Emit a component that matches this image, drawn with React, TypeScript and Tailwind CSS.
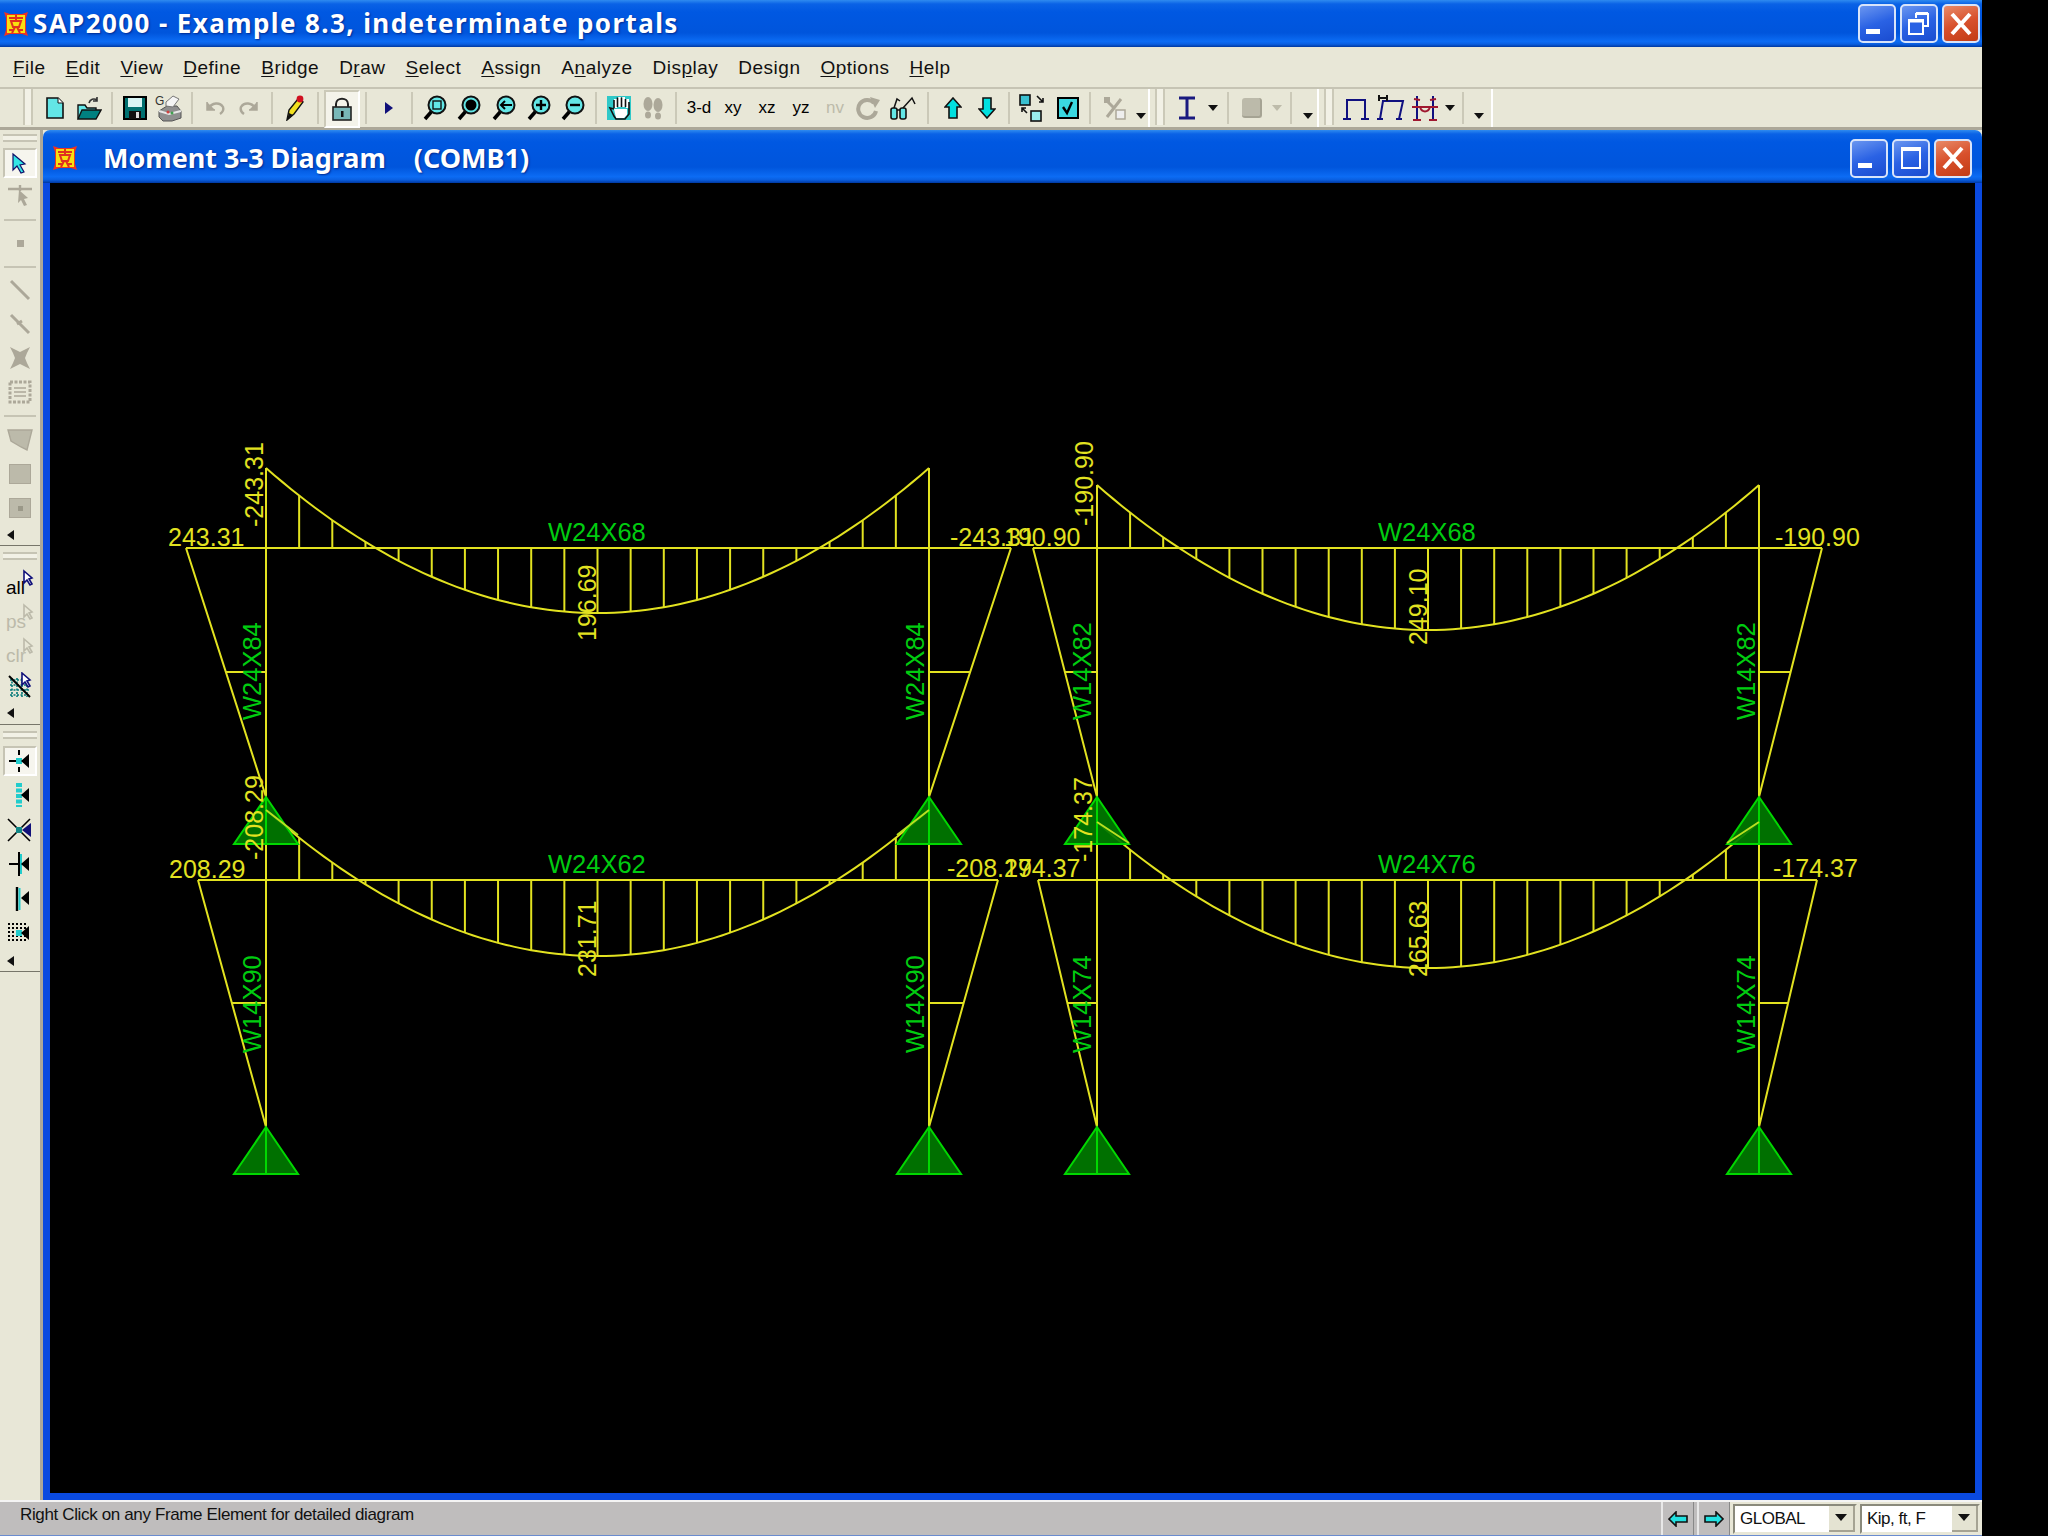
import React from "react";
import { clsx } from "clsx";

const TITLE_BG =
  "bg-[linear-gradient(180deg,#2f8bf0_0px,#0a62e6_4px,#0058e2_12px,#0055dc_70%,#0c6cf4_88%,#0a5fe0_94%,#0038a0_100%)]";

const YELLOW = "#e2e220";
const GREEN = "#00cc10";
const GRAY = "#aca899";
const CYAN = "#63e6e6";

// ---- window chrome

function SapLogo() {
  return (
    <svg width="24" height="24" viewBox="0 0 24 24">
      <path d="M0 0l6 2h12l6-2-2 6v12l2 6-6-2H6l-6 2 2-6V6z" fill="#ee3322" />
      <rect x="3" y="3" width="18" height="18" fill="#f8e010" />
      <path
        d="M5 6h14M12 3v6M7 9h10l-2 6H9zM8 21l3-6M16 21l-3-6M5 18h4M15 18h4"
        stroke="#e03020"
        strokeWidth="2"
        fill="none"
      />
    </svg>
  );
}

function CapButton({ kind, red }: { kind: "min" | "restore" | "max" | "close"; red?: boolean }) {
  return (
    <div
      className={clsx(
        "w-[38px] h-[39px] rounded-[5px] border-2 border-[#d8e4fa] flex items-center justify-center",
        red
          ? "bg-[linear-gradient(160deg,#e88a68,#d8502c_50%,#c23c16)]"
          : "bg-[linear-gradient(160deg,#6a96f0,#2a62e4_50%,#1a4cd0)]"
      )}
    >
      <svg width="30" height="30" viewBox="0 0 30 30">
        {kind === "min" && <rect x="4" y="20" width="14" height="5" fill="#fff" />}
        {kind === "restore" && (
          <g fill="none" stroke="#fff" strokeWidth="2">
            <path d="M12 9V5h12v12h-4" strokeWidth="2" />
            <path d="M12 4.5h12" strokeWidth="3" />
            <rect x="5" y="11" width="14" height="14" fill="#2a62e4" />
            <path d="M5 12h14" strokeWidth="3" />
          </g>
        )}
        {kind === "max" && (
          <g fill="none" stroke="#fff" strokeWidth="2">
            <rect x="6" y="5" width="18" height="20" />
            <path d="M6 6h18" strokeWidth="4" />
          </g>
        )}
        {kind === "close" && (
          <path d="M6 5l18 20M24 5L6 25" stroke="#fff" strokeWidth="4" fill="none" />
        )}
      </svg>
    </div>
  );
}

const menus: [string, string, string][] = [
  ["", "F", "ile"],
  ["", "E", "dit"],
  ["", "V", "iew"],
  ["", "D", "efine"],
  ["", "B", "ridge"],
  ["D", "r", "aw"],
  ["", "S", "elect"],
  ["", "A", "ssign"],
  ["A", "n", "alyze"],
  ["Dis", "p", "lay"],
  ["Desi", "g", "n"],
  ["", "O", "ptions"],
  ["", "H", "elp"],
];

// ---- toolbar pieces

function Slot({ className, children }: { className: string; children?: React.ReactNode }) {
  return <div className={clsx("h-full flex items-center justify-center shrink-0", className)}>{children}</div>;
}

function Sep({ className }: { className: string }) {
  return (
    <div className={clsx("h-full flex items-center justify-center shrink-0", className)}>
      <div className="w-[2px] h-[32px] bg-[#cbc9b8]" />
    </div>
  );
}

function Grip() {
  return (
    <div className="w-[10px] h-[36px] mx-[5px] border-2 border-y-0 border-[#cbc9b8] bg-[#f2f1e6] shrink-0" />
  );
}

function Caret({ low }: { low?: boolean }) {
  return (
    <svg width="12" height="16" viewBox="0 0 12 16" className={low ? "mt-[16px]" : ""}>
      <path d="M1 5h10L6 11z" fill="#111" />
    </svg>
  );
}

function Ico({ children, w = 26, h = 26 }: { children: React.ReactNode; w?: number; h?: number }) {
  return (
    <svg width={w} height={h} viewBox={`0 0 ${w} ${h}`}>
      {children}
    </svg>
  );
}

function Glass({ children }: { children?: React.ReactNode }) {
  return (
    <Ico>
      <path d="M3 24l7-8" stroke="#000" strokeWidth="3.5" />
      <circle cx="15" cy="10" r="8.5" fill={CYAN} stroke="#111" strokeWidth="2" />
      {children}
    </Ico>
  );
}

function TextBtn({ label, dim }: { label: string; dim?: boolean }) {
  return (
    <span className={clsx("font-['Liberation_Sans',sans-serif] text-[17px]", dim ? "text-[#bdbbaa]" : "text-black")}>
      {label}
    </span>
  );
}

function Portal({ variant }: { variant: 0 | 1 | 2 }) {
  return (
    <Ico w={30} h={28}>
      {variant === 0 && (
        <path d="M6 25V6h18v19M2 25h8M20 25h8M3 5" stroke="#101080" strokeWidth="2" fill="none" />
      )}
      {variant === 1 && (
        <g fill="none" stroke="#101080" strokeWidth="2">
          <path d="M5 25l3-18h20l-4 18M2 25h6M21 25h6M7 7h20" />
          <path d="M4 1v6M12 1v6M4 4h8" stroke="#111" />
        </g>
      )}
      {variant === 2 && (
        <g fill="none">
          <path d="M7 2v24M23 2v24" stroke="#101080" strokeWidth="2" />
          <path d="M2 13h26M10 13c2 6 8 6 10 0M3 26h8M19 26h8" stroke="#a01830" strokeWidth="2" />
          <path d="M4 5l6 1M26 5l-6 1" stroke="#a01830" strokeWidth="2" />
        </g>
      )}
    </Ico>
  );
}

function TopToolbar() {
  return (
    <div className="h-[43px] shrink-0 flex border-t-2 border-[#c6c4b4] border-b-[3px] border-b-[#aca899]">
      <div className="flex h-full w-[1150px] border-r-2 border-white pl-[18px] shrink-0">
        <Grip />
        <Slot className="w-[34px]">
          <Ico w={20} h={22}>
            <path d="M2 1h11l5 5v15H2z" fill={CYAN} stroke="#111" strokeWidth="1.6" />
            <path d="M13 1v5h5" fill="#fff" stroke="#111" strokeWidth="1" />
          </Ico>
        </Slot>
        <Slot className="w-[34px]">
          <Ico>
            <path d="M2 23V10h7l2 3h9v10z" fill={CYAN} stroke="#111" strokeWidth="1.4" />
            <path d="M2 24l4-9h19l-5 9z" fill="#008080" stroke="#111" strokeWidth="1.4" />
            <path d="M13 8c1-4 5-5 8-3M21 2v4h-4" fill="none" stroke="#333" strokeWidth="1.6" />
          </Ico>
        </Slot>
        <Sep className="w-[12px]" />
        <Slot className="w-[34px]">
          <Ico w={24} h={24}>
            <rect x="1" y="1" width="22" height="22" fill="#007070" stroke="#000" strokeWidth="2" />
            <rect x="5" y="2" width="14" height="9" fill="#d8f4f4" />
            <rect x="6" y="15" width="12" height="8" fill="#111" />
            <rect x="13" y="16" width="3" height="6" fill="#ddd" />
          </Ico>
        </Slot>
        <Slot className="w-[34px]">
          <Ico w={28} h={28}>
            <path d="M4 17l8-5h10l4 5v7l-9 3H8l-4-4z" fill="#8f8f8f" stroke="#555" />
            <path d="M4 17l10 3 12-3" fill="none" stroke="#e8e8e8" strokeWidth="2" />
            <path d="M11 8l7-6 6 3-6 8-7-1z" fill="#f4f4f4" stroke="#777" />
            <circle cx="13" cy="18" r="1.5" fill="#d04040" />
            <circle cx="17" cy="19" r="1.5" fill="#40a050" />
            <text x="0" y="11" fontSize="12" fontFamily="Liberation Sans, sans-serif" fill="#333">
              G
            </text>
          </Ico>
        </Slot>
        <Sep className="w-[12px]" />
        <Slot className="w-[34px]">
          <Ico w={22} h={16}>
            <path d="M3 2v8h8" fill={GRAY} stroke={GRAY} strokeWidth="1.5" />
            <path d="M4 9c4-7 12-7 15-2 1 3 0 5-3 7" fill="none" stroke={GRAY} strokeWidth="2.4" />
          </Ico>
        </Slot>
        <Slot className="w-[34px]">
          <Ico w={22} h={16}>
            <path d="M19 2v8h-8" fill={GRAY} stroke={GRAY} strokeWidth="1.5" />
            <path d="M18 9C14 2 6 2 3 7c-1 3 0 5 3 7" fill="none" stroke={GRAY} strokeWidth="2.4" />
          </Ico>
        </Slot>
        <Sep className="w-[12px]" />
        <Slot className="w-[34px]">
          <Ico w={18} h={26}>
            <path d="M1 25l2-10 9-11 5 3-9 12z" fill="#f2e020" stroke="#111" strokeWidth="1.4" />
            <path d="M1 25l2-7 4 2z" fill="#111" />
            <circle cx="14" cy="4" r="3.4" fill="#d01020" />
          </Ico>
        </Slot>
        <Sep className="w-[12px]" />
        <Slot className="w-[36px] border-2 border-[#cbc9b8] border-b-white border-r-white bg-[#f4f3ea] h-[36px] mt-[1px]">
          <Ico w={22} h={24}>
            <path d="M5 11V7c0-7 12-7 12 0v4" fill="none" stroke="#222" strokeWidth="2" />
            <rect x="2" y="10" width="18" height="13" fill="#79b8b8" stroke="#222" strokeWidth="1.6" />
            <rect x="10" y="14" width="2.5" height="6" fill="#111" />
          </Ico>
        </Slot>
        <Sep className="w-[12px]" />
        <Slot className="w-[34px]">
          <svg width="8" height="12" viewBox="0 0 8 12">
            <path d="M0 0l8 6-8 6z" fill="#10107a" />
          </svg>
        </Slot>
        <Sep className="w-[12px]" />
        <Slot className="w-[34px]">
          <Glass>
            <rect x="11" y="6" width="8" height="8" fill="none" stroke="#111" strokeWidth="1.4" />
          </Glass>
        </Slot>
        <Slot className="w-[34px]">
          <Glass>
            <circle cx="15" cy="10" r="5.5" fill="#000" />
          </Glass>
        </Slot>
        <Slot className="w-[36px]">
          <Glass>
            <path d="M21 10H10M14 6l-4 4 4 4" fill="none" stroke="#000" strokeWidth="2" />
          </Glass>
        </Slot>
        <Slot className="w-[34px]">
          <Glass>
            <path d="M15 5v10M10 10h10" stroke="#000" strokeWidth="2.4" />
          </Glass>
        </Slot>
        <Slot className="w-[34px]">
          <Glass>
            <path d="M10 10h10" stroke="#000" strokeWidth="2.4" />
          </Glass>
        </Slot>
        <Sep className="w-[12px]" />
        <Slot className="w-[34px]">
          <Ico w={24} h={24}>
            <rect x="0" y="0" width="24" height="24" fill="#30c8c8" />
            <path d="M7 13h13v6l-3 3H9z" fill="#fff" />
            <path d="M7 3h3v9H7zM11 1h3v10h-3zM15 1h3v10h-3zM19 3h3v9h-3z" fill="#fff" />
            <path
              d="M7 12V4M10.500 11V1.500M14.500 11V1.500M18.500 11V3M22 12V6M7 13l-4-1 4 8 2 3h9l4-5v-6"
              fill="none"
              stroke="#111"
              strokeWidth="1.6"
            />
          </Ico>
        </Slot>
        <Slot className="w-[34px]">
          <Ico w={22} h={24}>
            <ellipse cx="6" cy="8" rx="4.5" ry="7" fill={GRAY} />
            <ellipse cx="6" cy="19" rx="3" ry="3.5" fill={GRAY} />
            <ellipse cx="16" cy="9" rx="4.5" ry="7" fill={GRAY} />
            <ellipse cx="16" cy="20" rx="3" ry="3.5" fill={GRAY} />
          </Ico>
        </Slot>
        <Sep className="w-[12px]" />
        <Slot className="w-[34px]">
          <TextBtn label="3-d" />
        </Slot>
        <Slot className="w-[34px]">
          <TextBtn label="xy" />
        </Slot>
        <Slot className="w-[34px]">
          <TextBtn label="xz" />
        </Slot>
        <Slot className="w-[34px]">
          <TextBtn label="yz" />
        </Slot>
        <Slot className="w-[34px]">
          <TextBtn label="nv" dim />
        </Slot>
        <Slot className="w-[34px]">
          <Ico>
            <path d="M18 8a9 9 0 1 0 2 8" fill="none" stroke={GRAY} strokeWidth="4" />
            <path d="M14 2l10 3-5 8z" fill={GRAY} />
          </Ico>
        </Slot>
        <Slot className="w-[34px]">
          <Ico w={30} h={26}>
            <rect x="3" y="13" width="6" height="11" rx="2" fill={CYAN} stroke="#111" strokeWidth="1.6" />
            <rect x="12" y="13" width="6" height="11" rx="2" fill={CYAN} stroke="#111" strokeWidth="1.6" />
            <path d="M6 13l3-9 3 2M15 13l9-10 3 6M9 15h3" fill="none" stroke="#111" strokeWidth="1.5" />
          </Ico>
        </Slot>
        <Sep className="w-[16px]" />
        <Slot className="w-[34px]">
          <Ico w={18} h={22}>
            <path d="M9 1l8 9h-4v11H5V10H1z" fill="#00e0e0" stroke="#111" strokeWidth="1.6" />
          </Ico>
        </Slot>
        <Slot className="w-[34px]">
          <Ico w={18} h={22}>
            <path d="M9 21l8-9h-4V1H5v11H1z" fill="#00e0e0" stroke="#111" strokeWidth="1.6" />
          </Ico>
        </Slot>
        <Sep className="w-[10px]" />
        <Slot className="w-[36px]">
          <Ico w={28} h={30}>
            <rect x="2" y="2" width="10" height="10" fill="#3ac0d0" stroke="#111" strokeWidth="1.6" />
            <rect x="13" y="18" width="10" height="10" fill="#9ee" stroke="#111" strokeWidth="1.6" />
            <path d="M19 3l6 6M25 5v4h-4M9 20l-5-5M4 19v-4h4" fill="none" stroke="#111" strokeWidth="1.6" />
          </Ico>
        </Slot>
        <Slot className="w-[36px]">
          <Ico w={22} h={22}>
            <rect x="1" y="1" width="20" height="20" fill="#3ad8e0" stroke="#000" strokeWidth="2" />
            <path d="M6 10l4 6 5-11" fill="none" stroke="#000" strokeWidth="2.4" />
          </Ico>
        </Slot>
        <Sep className="w-[8px]" />
        <Slot className="w-[3px]" />
        <Slot className="w-[34px]">
          <Ico>
            <path d="M4 4l8 8M20 4L6 22" stroke={GRAY} strokeWidth="3" />
            <rect x="3" y="2" width="6" height="6" fill={GRAY} />
            <rect x="15" y="15" width="9" height="9" fill="#eee" stroke={GRAY} strokeWidth="1.5" />
          </Ico>
        </Slot>
        <Slot className="w-[20px]">
          <Caret low />
        </Slot>
      </div>

      <div className="flex h-full w-[169px] border-r-2 border-white shrink-0">
        <Grip />
        <Slot className="w-[32px] ml-[1px]">
          <Ico w={18} h={24}>
            <path d="M1 2h16M9 2v20M1 22h16" stroke="#1a1a80" strokeWidth="3" fill="none" />
          </Ico>
        </Slot>
        <Slot className="w-[20px]">
          <Caret />
        </Slot>
        <Sep className="w-[10px]" />
        <Slot className="w-[34px] ml-[2px]">
          <div className="w-[20px] h-[20px] rounded-[3px] bg-[#bcbaaa] border-r-2 border-b-2 border-[#a5a393]" />
        </Slot>
        <Slot className="w-[16px]">
          <svg width="12" height="8" viewBox="0 0 12 8">
            <path d="M1 1h10L6 7z" fill="#bdbbaa" />
          </svg>
        </Slot>
        <Sep className="w-[12px]" />
        <Slot className="w-[22px]">
          <Caret low />
        </Slot>
      </div>

      <div className="flex h-full w-[174px] border-r-2 border-white shrink-0">
        <Grip />
        <Slot className="w-[34px]">
          <Portal variant={0} />
        </Slot>
        <Slot className="w-[34px]">
          <Portal variant={1} />
        </Slot>
        <Slot className="w-[35px]">
          <Portal variant={2} />
        </Slot>
        <Slot className="w-[16px]">
          <Caret />
        </Slot>
        <Sep className="w-[10px]" />
        <Slot className="w-[22px]">
          <Caret low />
        </Slot>
      </div>
    </div>
  );
}

// ---- left toolbar

function VSlot({ className, children }: { className: string; children?: React.ReactNode }) {
  return <div className={clsx("w-full flex items-center justify-center shrink-0", className)}>{children}</div>;
}

function VSep({ className }: { className: string }) {
  return (
    <div className={clsx("w-full flex items-center justify-center shrink-0", className)}>
      <div className="h-[2px] w-[32px] bg-[#c6c4b4]" />
    </div>
  );
}

function VGrip({ className }: { className: string }) {
  return (
    <div className={clsx("w-full flex items-center justify-center shrink-0", className)}>
      <div className="h-[8px] w-[34px] border-2 border-x-0 border-[#c6c4b4] bg-[#f2f1e6]" />
    </div>
  );
}

function BackArrow() {
  return (
    <div className="w-full h-full flex items-center pl-[7px]">
      <svg width="7" height="10" viewBox="0 0 7 10">
        <path d="M7 0v10L0 5z" fill="#111" />
      </svg>
    </div>
  );
}

function Cursor({ color, x = 0, y = 0 }: { color: string; x?: number; y?: number }) {
  return (
    <path
      transform={`translate(${x} ${y})`}
      d="M0 0l12 10-5 1 4 7-3 1-4-7-4 4z"
      fill={color}
      stroke="#10106a"
      strokeWidth="1.2"
    />
  );
}

function SelectLabel({ text, dim }: { text: string; dim?: boolean }) {
  return (
    <Ico w={30} h={28}>
      <text
        x="1"
        y="25"
        fontSize="19"
        fontFamily="Liberation Sans, sans-serif"
        fill={dim ? "#bcbaaa" : "#000"}
      >
        {text}
      </text>
      <path
        transform="translate(19 2)"
        d="M0 0l8 7-3 1 3 5-2 1-3-5-3 3z"
        fill={dim ? "#e8e7d7" : "#fff"}
        stroke={dim ? "#bcbaaa" : "#10107a"}
        strokeWidth="1.6"
      />
    </Ico>
  );
}

function Snap({ children }: { children: React.ReactNode }) {
  return (
    <Ico w={30} h={28}>
      {children}
      <path d="M24 7v14l-8-7z" fill="#000" />
    </Ico>
  );
}

function LeftToolbar() {
  return (
    <div className="w-[43px] shrink-0 flex flex-col bg-[#e8e7d7] border-r-[3px] border-[#aca899]">
      <div className="flex flex-col w-full border-b border-[#77766a]">
        <VGrip className="h-[16px]" />
        <VSlot className="h-[34px]">
          <div className="w-[34px] h-[30px] bg-[#f6f5ee] border-2 border-[#c6c4b4] border-r-white border-b-white flex items-center justify-center">
            <Ico w={18} h={22}>
              <Cursor color="#33e6e6" x={2} y={2} />
            </Ico>
          </div>
        </VSlot>
        <VSlot className="h-[34px]">
          <Ico w={26} h={26}>
            <path d="M1 5h24M13 1v6" stroke={GRAY} strokeWidth="2.4" />
            <path d="M12 6l9 8-4 1 3 6-3 1-3-6-3 3z" fill={GRAY} />
          </Ico>
        </VSlot>
        <VSep className="h-[12px]" />
        <VSlot className="h-[34px]">
          <div className="w-[7px] h-[7px] bg-[#aca899]" />
        </VSlot>
        <VSep className="h-[13px]" />
        <VSlot className="h-[34px]">
          <Ico w={24} h={24}>
            <path d="M3 3l18 18" stroke={GRAY} strokeWidth="3" />
          </Ico>
        </VSlot>
        <VSlot className="h-[34px]">
          <Ico w={24} h={24}>
            <path d="M3 3l18 18M9 12l5-3" stroke={GRAY} strokeWidth="3" />
          </Ico>
        </VSlot>
        <VSlot className="h-[34px]">
          <Ico w={24} h={24}>
            <path d="M2 1l6 3 4 2 4-2 6-3-3 6-2 5 2 5 3 6-6-3-4-2-4 2-6 3 3-6 2-5-2-5z" fill={GRAY} />
          </Ico>
        </VSlot>
        <VSlot className="h-[34px]">
          <Ico w={24} h={24}>
            <rect x="2" y="2" width="20" height="20" fill="none" stroke={GRAY} strokeWidth="3" strokeDasharray="3 1.5" />
            <path d="M6 8h12M6 12h12M6 16h12" stroke={GRAY} strokeWidth="1.6" />
          </Ico>
        </VSlot>
        <VSep className="h-[14px]" />
        <VSlot className="h-[34px]">
          <Ico w={26} h={24}>
            <path d="M1 2h24l-5 20-6-3-10-6z" fill="#bcbaaa" stroke={GRAY} strokeWidth="1.4" />
          </Ico>
        </VSlot>
        <VSlot className="h-[34px]">
          <div className="w-[22px] h-[20px] bg-[#bcbaaa] border border-[#aca899]" />
        </VSlot>
        <VSlot className="h-[34px]">
          <div className="w-[22px] h-[20px] bg-[#bcbaaa] border border-[#aca899] flex items-center justify-center">
            <div className="w-[5px] h-[5px] bg-[#9a9888]" />
          </div>
        </VSlot>
        <div className="h-[20px]">
          <BackArrow />
        </div>
      </div>

      <div className="flex flex-col w-full border-b border-[#77766a]">
        <VGrip className="h-[20px]" />
        <VSlot className="h-[34px]">
          <SelectLabel text="all" />
        </VSlot>
        <VSlot className="h-[34px]">
          <SelectLabel text="ps" dim />
        </VSlot>
        <VSlot className="h-[34px]">
          <SelectLabel text="clr" dim />
        </VSlot>
        <VSlot className="h-[34px]">
          <Ico w={26} h={26}>
            <path
              d="M3 8h19M3 13h19M3 18h19M3 23h19M5 6v19M10 6v19M15 6v19M20 6v19"
              stroke="#007878"
              strokeWidth="1.6"
              strokeDasharray="2 1.5"
            />
            <path d="M2 4l21 21" stroke="#000" strokeWidth="2" />
            <path
              transform="translate(15 1)"
              d="M0 0l8 7-3 1 3 5-2 1-3-5-3 3z"
              fill="#fff"
              stroke="#10107a"
              strokeWidth="1.6"
            />
          </Ico>
        </VSlot>
        <div className="h-[22px]">
          <BackArrow />
        </div>
      </div>

      <div className="flex flex-col w-full border-b border-[#77766a]">
        <VGrip className="h-[20px]" />
        <VSlot className="h-[32px]">
          <div className="w-[34px] h-[30px] bg-[#f6f5ee] border-2 border-[#c6c4b4] border-r-white border-b-white flex items-center justify-center">
            <Snap>
              <path d="M4 14h18M14 3v5M14 20v5" stroke="#000" strokeWidth="2" />
              <rect x="11" y="11" width="6" height="6" fill="#22cccc" />
            </Snap>
          </div>
        </VSlot>
        <VSlot className="h-[35px]">
          <Snap>
            <path d="M14 2v24" stroke="#22cccc" strokeWidth="6" strokeDasharray="4 1.5" />
          </Snap>
        </VSlot>
        <VSlot className="h-[35px]">
          <Ico w={30} h={28}>
            <path d="M3 3l22 22M25 3L3 25" stroke="#000" strokeWidth="1.6" />
            <rect x="11" y="11" width="6" height="6" fill="#108888" />
            <path d="M26 7v14l-9-7z" fill="#10107a" />
          </Ico>
        </VSlot>
        <VSlot className="h-[34px]">
          <Snap>
            <path d="M4 14h10" stroke="#000" strokeWidth="2" />
            <path d="M14 2v24" stroke="#000" strokeWidth="2" />
            <path d="M16 4v20" stroke="#22cccc" strokeWidth="2" />
          </Snap>
        </VSlot>
        <VSlot className="h-[34px]">
          <Snap>
            <path d="M12 3v24" stroke="#000" strokeWidth="2.4" />
            <path d="M14.500 4v22" stroke="#22cccc" strokeWidth="2" />
          </Snap>
        </VSlot>
        <VSlot className="h-[36px]">
          <Snap>
            <path
              d="M3 5h20M3 9h20M3 13h20M3 17h20M3 21h20"
              stroke="#000"
              strokeWidth="2"
              strokeDasharray="2 2"
            />
            <rect x="11" y="11" width="6" height="6" fill="#22cccc" />
          </Snap>
        </VSlot>
        <div className="h-[20px]">
          <BackArrow />
        </div>
      </div>
    </div>
  );
}

// ---- the moment diagram

type Beam = { x0: number; x1: number; base: number; top: number; low: number; left: number; right: number };

const beams: Beam[] = [
  { x0: 266, x1: 929, base: 548, top: 468, low: 613, left: 186, right: 1011 },
  { x0: 1097, x1: 1759, base: 548, top: 485, low: 630, left: 1033, right: 1822 },
  { x0: 266, x1: 929, base: 880, top: 810, low: 956, left: 198, right: 998 },
  { x0: 1097, x1: 1759, base: 880, top: 822, low: 968, left: 1038, right: 1817 },
];

// column: x, joint y, foot y, x of the diagram's far end, tick x
const columns = [
  [266, 548, 797, 186, 226],
  [929, 548, 797, 1011, 970],
  [1097, 548, 797, 1033, 1064],
  [1759, 548, 797, 1822, 1791],
  [266, 880, 1127, 198, 232],
  [929, 880, 1127, 998, 963],
  [1097, 880, 1127, 1038, 1067],
  [1759, 880, 1127, 1817, 1788],
];

const supports = [
  [266, 797],
  [929, 797],
  [1097, 797],
  [1759, 797],
  [266, 1127],
  [929, 1127],
  [1097, 1127],
  [1759, 1127],
];

const curveY = (b: Beam, x: number) => {
  const c = (b.x0 + b.x1) / 2;
  const h = (b.x1 - b.x0) / 2;
  return b.low - (b.low - b.top) * ((x - c) / h) ** 2;
};

const hLabels: [string, number, number, string][] = [
  ["243.31", 168, 546, YELLOW],
  ["W24X68", 548, 541, GREEN],
  ["-243.31", 950, 546, YELLOW],
  ["190.90", 1004, 546, YELLOW],
  ["W24X68", 1378, 541, GREEN],
  ["-190.90", 1775, 546, YELLOW],
  ["208.29", 169, 878, YELLOW],
  ["W24X62", 548, 873, GREEN],
  ["-208.29", 947, 877, YELLOW],
  ["174.37", 1004, 877, YELLOW],
  ["W24X76", 1378, 873, GREEN],
  ["-174.37", 1773, 877, YELLOW],
];

const vLabels: [string, number, number, string][] = [
  ["-243.31", 263, 527, YELLOW],
  ["196.69", 596, 641, YELLOW],
  ["W24X84", 261, 720, GREEN],
  ["W24X84", 924, 720, GREEN],
  ["-190.90", 1093, 526, YELLOW],
  ["249.10", 1427, 645, YELLOW],
  ["W14X82", 1091, 720, GREEN],
  ["W14X82", 1755, 720, GREEN],
  ["-208.29", 263, 860, YELLOW],
  ["231.71", 596, 977, YELLOW],
  ["W14X90", 261, 1053, GREEN],
  ["W14X90", 924, 1053, GREEN],
  ["-174.37", 1092, 862, YELLOW],
  ["265.63", 1427, 977, YELLOW],
  ["W14X74", 1091, 1053, GREEN],
  ["W14X74", 1755, 1053, GREEN],
];

function Diagram() {
  return (
    <svg viewBox="51 183 1923 1310" className="block w-full h-full bg-black font-['Liberation_Sans',sans-serif]">
      <g stroke={YELLOW} strokeWidth="2" fill="none">
        {beams.map((b, i) => {
          const pts = Array.from({ length: 81 }, (_, k) => {
            const x = b.x0 + ((b.x1 - b.x0) * k) / 80;
            return `${x},${curveY(b, x)}`;
          });
          const ticks = Array.from({ length: 21 }, (_, k) => b.x0 + ((b.x1 - b.x0) * k) / 20);
          return (
            <g key={i}>
              <path d={`M${b.left} ${b.base}H${b.right}`} />
              {ticks.map((x) => (
                <path key={x} d={`M${x} ${b.base}V${curveY(b, x)}`} />
              ))}
              <polyline points={pts.join(" ")} />
            </g>
          );
        })}
        {columns.map(([x, y0, y1, end, tick], i) => (
          <path key={i} d={`M${end} ${y0}L${x} ${y1}V${y0}M${x} ${(y0 + y1) / 2 - 0.5}H${tick}`} />
        ))}
      </g>
      {supports.map(([x, y], i) => (
        <g key={i}>
          <path
            d={`M${x} ${y}L${x + 32} ${y + 47}H${x - 32}Z`}
            fill="#007a00"
            fillOpacity="0.92"
            stroke="#00d800"
            strokeWidth="2"
          />
          <path d={`M${x} ${y}V${y + 47}`} stroke="#00d800" strokeWidth="2" />
        </g>
      ))}
      {/* curve ends run over the upper supports */}
      <g stroke="#b8e020" strokeWidth="2" fill="none">
        <path d="M266 810L298 835M929 810L897 835M1097 822L1129 843M1759 822L1727 843" />
      </g>
      {hLabels.map(([t, x, y, c], i) => (
        <text key={i} x={x} y={y} fontSize={c === GREEN ? 25.5 : 25} fill={c}>
          {t}
        </text>
      ))}
      {vLabels.map(([t, x, y, c], i) => (
        <text key={i} transform={`translate(${x} ${y}) rotate(-90)`} fontSize={c === GREEN ? 25.5 : 25} fill={c}>
          {t}
        </text>
      ))}
    </svg>
  );
}

// ---- status bar

function StatusArrow({ left }: { left?: boolean }) {
  return (
    <div className="w-[33px] h-full bg-[#bfbdbd] border-l-2 border-[#e8e8e8] border-r border-r-[#888] flex items-center justify-center">
      <svg width="20" height="16" viewBox="0 0 20 16" className={left ? "" : "rotate-180"}>
        <path d="M1 8l7-7v4h11v6H8v4z" fill="#22e0e0" stroke="#111" strokeWidth="1.6" />
      </svg>
    </div>
  );
}

function Combo({ label, className }: { label: string; className: string }) {
  return (
    <div
      className={clsx(
        "h-[30px] bg-white border-2 border-[#8a8a7c] border-r-[#e8e7d7] border-b-[#e8e7d7] flex items-center justify-between pl-[5px] font-['Liberation_Sans',sans-serif] text-[17px] tracking-[-0.5px] text-[#111]",
        className
      )}
    >
      <span>{label}</span>
      <div className="w-[26px] h-[26px] bg-[#e4e3d2] border-b-2 border-r-2 border-[#a5a393] flex items-center justify-center">
        <svg width="12" height="8" viewBox="0 0 12 8">
          <path d="M0 0h12L6 7z" fill="#111" />
        </svg>
      </div>
    </div>
  );
}

function StatusBar() {
  return (
    <div className="h-[36px] shrink-0 flex items-center bg-[#bfbdbd] border-t-2 border-[#f4f4f4] border-b border-b-[#6a8cd0]">
      <div className="flex-1 pl-[20px] font-['Liberation_Sans',sans-serif] text-[17px] tracking-[-0.36px] text-[#111] -mt-[7px]">
        Right Click on any Frame Element for detailed diagram
      </div>
      <StatusArrow left />
      <div className="w-[3px]" />
      <StatusArrow />
      <div className="h-full bg-[#e8e7d7] flex items-center gap-[3px] pl-[3px] pr-[2px]">
        <Combo label="GLOBAL" className="w-[124px]" />
        <Combo label="Kip, ft, F" className="w-[120px]" />
      </div>
    </div>
  );
}

export default function App() {
  return (
    <div className="w-[2048px] h-[1536px] bg-black overflow-hidden">
      <div className="w-[1982px] h-full flex flex-col bg-[#e8e7d7]">
        {/* main title bar */}
        <div className={clsx("h-[47px] shrink-0 flex items-center pl-[4px] pr-[2px]", TITLE_BG)}>
          <SapLogo />
          <div className="flex-1 pl-[5px] font-['Noto_Sans',sans-serif] font-bold text-[26px] tracking-[1.4px] text-white [text-shadow:1px_1px_2px_#002a90] -mt-[1px]">
            SAP2000 - Example 8.3, indeterminate portals
          </div>
          <div className="flex gap-[4px]">
            <CapButton kind="min" />
            <CapButton kind="restore" />
            <CapButton kind="close" red />
          </div>
        </div>

        {/* menu */}
        <div className="h-[40px] shrink-0 flex items-center gap-[20px] pl-[13px] pt-[2px] font-['Liberation_Sans',sans-serif] text-[19px] tracking-[0.5px] text-[#111]">
          {menus.map(([a, u, b]) => (
            <span key={a + u + b}>
              {a}
              <span className="underline underline-offset-2">{u}</span>
              {b}
            </span>
          ))}
        </div>

        <TopToolbar />

        <div className="flex-1 flex min-h-0">
          <LeftToolbar />

          {/* child window */}
          <div className="flex-1 flex flex-col min-w-0">
            <div className={clsx("h-[53px] shrink-0 rounded-t-[7px] flex items-center pl-[10px] pr-[10px] pt-[3px]", TITLE_BG)}>
              <SapLogo />
              <div className="flex-1 pl-[26px] font-['Noto_Sans',sans-serif] font-bold text-[27px] text-white whitespace-pre [text-shadow:1px_1px_2px_#002a90]">
                {"Moment 3-3 Diagram    (COMB1)"}
              </div>
              <div className="flex gap-[4px]">
                <CapButton kind="min" />
                <CapButton kind="max" />
                <CapButton kind="close" red />
              </div>
            </div>
            <div className="flex-1 min-h-0 border-x-[7px] border-b-[7px] border-[#0a4ae0]">
              <Diagram />
            </div>
          </div>
        </div>

        <StatusBar />
      </div>
    </div>
  );
}
